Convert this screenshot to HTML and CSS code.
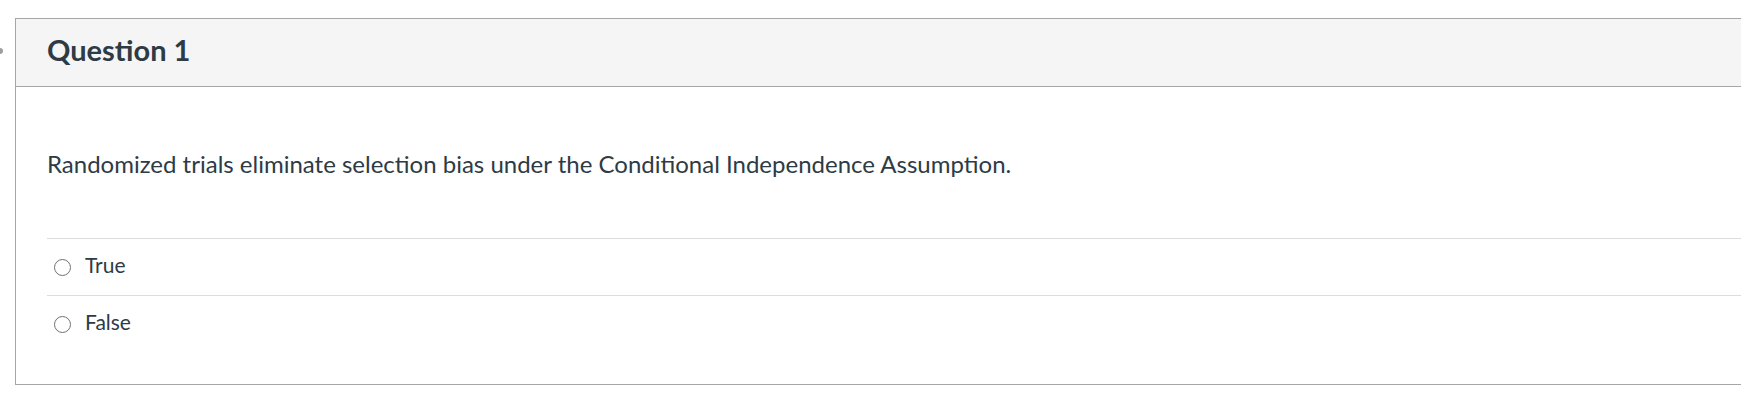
FILE: index.html
```html
<!DOCTYPE html>
<html lang="en">
<head>
<meta charset="utf-8">
<title>Question 1</title>
<link rel="stylesheet" href="styles.css">
</head>
<body>
<div class="page">
  <div class="gutter"><span class="gutter-mark"></span></div>
  <div class="question">
    <div class="q-header">
      <h2 class="q-title">Question 1</h2>
    </div>
    <div class="q-body">
      <p class="q-text">Randomized trials eliminate selection bias under the Conditional Independence Assumption.</p>
      <div class="answers">
        <label class="answer"><span class="radio"></span><span class="answer-text">True</span></label>
        <label class="answer"><span class="radio"></span><span class="answer-text">False</span></label>
      </div>
    </div>
  </div>
</div>
</body>
</html>
```
FILE: styles.css
```css
html, body {
  margin: 0;
  padding: 0;
  background: #ffffff;
  overflow: hidden;
}
body {
  font-family: Lato, "Open Sans", sans-serif;
  color: #2d3b45;
}
.page {
  display: flex;
  padding-top: 18px;
  width: 1780px;
}
.gutter {
  width: 15px;
  flex: none;
  padding-top: 30px;
}
.gutter-mark {
  display: block;
  width: 3px;
  height: 6px;
  border-radius: 0 3px 3px 0;
  background: #9aa0a4;
}
.question {
  flex: 1;
  border: 1px solid #a6a6a6;
  height: 365px;
  box-sizing: content-box;
}
.q-header {
  background: #f5f5f5;
  border-bottom: 1px solid #a6a6a6;
  height: 67px;
  padding-left: 31px;
  display: flex;
  align-items: center;
}
.q-title {
  margin: 0;
  font-size: 29px;
  font-weight: 700;
  line-height: 1;
  padding-bottom: 6px;
}
.q-body {
  padding: 0 0 0 31px;
}
.q-text {
  margin: 0;
  padding-top: 63px;
  font-size: 24px;
  line-height: 1.2;
  height: 88px;
}
.answers {
  display: flex;
  flex-direction: column;
}
.answer {
  display: flex;
  align-items: center;
  height: 56px;
  border-top: 1px solid #dcdcdc;
  padding-left: 7px;
  padding-bottom: 5px;
  box-sizing: border-box;
  height: 57px;
}
.radio {
  width: 15px;
  height: 15px;
  border: 1px solid #707070;
  border-radius: 50%;
  flex: none;
  margin-right: 14px;
  margin-top: 5px;
}
.answer-text {
  font-size: 21px;
  line-height: 1;
}
```
